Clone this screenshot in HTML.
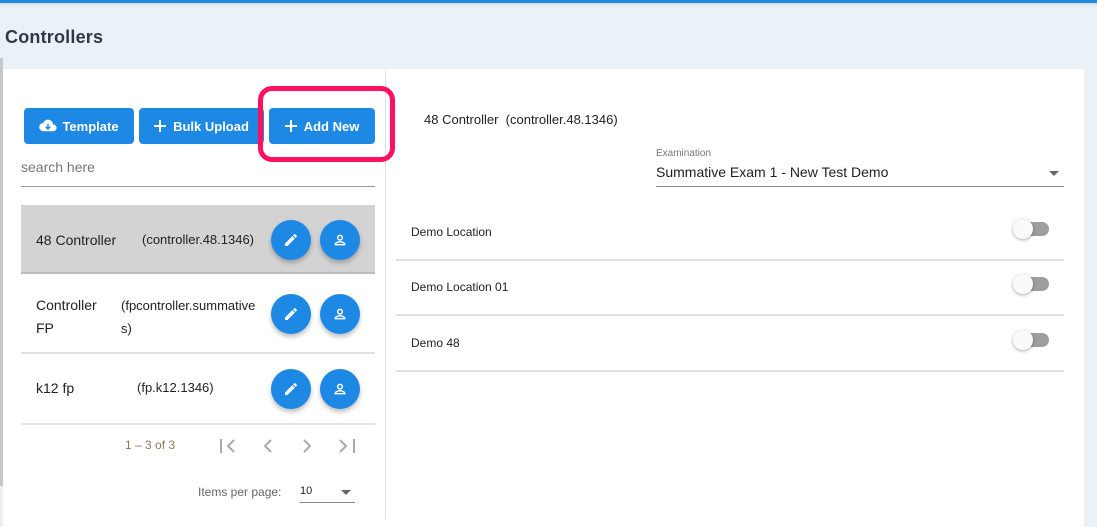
<!DOCTYPE html>
<html><head><style>
*{box-sizing:border-box;margin:0;padding:0}
body{width:1097px;height:527px;background:#ebf2f7;font-family:"Liberation Sans",sans-serif;position:relative;overflow:hidden;color:#222}
.a{position:absolute}
.btn{position:absolute;top:108px;height:36px;background:#1e88e5;color:#fff;border-radius:4px;font-size:13px;font-weight:bold;display:flex;align-items:center;justify-content:center;gap:5px}
.fab{position:absolute;width:40px;height:40px;border-radius:50%;background:#1e88e5;box-shadow:0 3px 5px rgba(0,0,0,.25);display:flex;align-items:center;justify-content:center}
.hr{position:absolute;height:2px;background:#e0e0e0}
.tog{position:absolute;width:34px;height:14px;border-radius:7px;background:#9e9e9e}
.tog:before{content:"";position:absolute;left:-2px;top:-3px;width:20px;height:20px;border-radius:50%;background:#fafafa;box-shadow:0 1px 3px rgba(0,0,0,.35)}
.plus{width:12px;height:12px;position:relative}
.plus:before,.plus:after{content:"";position:absolute;background:#fff}
.plus:before{left:5px;top:0;width:2px;height:12px}
.plus:after{left:0;top:5px;width:12px;height:2px}
</style></head><body>
<div class="a" style="left:0;top:0;width:1097px;height:3px;background:#1e88e5"></div>
<div class="a" style="left:0;top:3px;width:1097px;height:4px;background:linear-gradient(#d5dde3,#ebf2f7)"></div>
<div class="a" style="left:5px;top:27px;font-size:18px;color:#2d3a45;font-weight:bold;letter-spacing:0.2px;-webkit-text-stroke:0">Controllers</div>
<div class="a" style="left:0;top:58px;width:3px;height:428px;background:#c8c8c8"></div>
<div class="a" style="left:3px;top:69px;width:1081px;height:458px;background:#fff"></div>
<div class="a" style="left:385px;top:69px;width:1px;height:450px;background:#e0e0e0"></div>

<div class="btn" style="left:24px;width:110px"><svg width="18" height="14" viewBox="0 0 24 18"><path d="M19 7A7 7 0 0 0 5.5 5 5.5 5.5 0 0 0 6 16h13a4.5 4.5 0 0 0 0-9z" fill="#fff"/><path d="M12 6v6M9 10l3 3 3-3" stroke="#1e88e5" stroke-width="2" fill="none"/></svg>Template</div>
<div class="btn" style="left:139px;width:125px;gap:7px"><span class="plus"></span>Bulk Upload</div>
<div class="btn" style="left:269px;width:106px;gap:7px"><span class="plus"></span>Add New</div>
<div class="a" style="left:258px;top:86px;width:137px;height:76px;border:5px solid #ff1060;border-radius:14px"></div>

<div class="a" style="left:21px;top:159px;font-size:14px;color:#777">search here</div>
<div class="a" style="left:21px;top:186px;width:354px;height:1px;background:#999"></div>

<div class="a" style="left:21px;top:205px;width:354px;height:69px;background:#d3d3d3;border-bottom:2px solid #bbb"></div>
<div class="a" style="left:36px;top:232px;font-size:14px">48 Controller</div>
<div class="a" style="left:142px;top:232px;font-size:13px">(controller.48.1346)</div>
<div class="a" style="left:36px;top:294px;font-size:14px;line-height:23px">Controller<br>FP</div>
<div class="a" style="left:121px;top:294px;font-size:13px;line-height:23px">(fpcontroller.summative<br>s)</div>
<div class="hr" style="left:21px;top:352px;width:354px"></div>
<div class="a" style="left:36px;top:380px;font-size:14px">k12 fp</div>
<div class="a" style="left:137px;top:380px;font-size:13px">(fp.k12.1346)</div>
<div class="hr" style="left:21px;top:423px;width:354px"></div>

<div class="fab" style="left:271px;top:220px"><svg width="16" height="16" viewBox="0 0 24 24"><path d="M3 17.25V21h3.75L17.8 9.94l-3.75-3.75L3 17.25zM20.7 7.04a1 1 0 0 0 0-1.41l-2.34-2.34a1 1 0 0 0-1.41 0l-1.830 1.83 3.75 3.75 1.83-1.83z" fill="#fff"/></svg></div>
<div class="fab" style="left:320px;top:220px"><svg width="14" height="14" viewBox="0 0 24 24"><circle cx="12" cy="8" r="4" fill="none" stroke="#fff" stroke-width="2.5"/><path d="M4 20v-1c0-2 5-4 8-4s8 2 8 4v1z" fill="none" stroke="#fff" stroke-width="2.5"/></svg></div>
<div class="fab" style="left:271px;top:294px"><svg width="16" height="16" viewBox="0 0 24 24"><path d="M3 17.25V21h3.75L17.8 9.94l-3.75-3.75L3 17.25zM20.7 7.04a1 1 0 0 0 0-1.41l-2.34-2.34a1 1 0 0 0-1.41 0l-1.83 1.83 3.75 3.75 1.83-1.830z" fill="#fff"/></svg></div>
<div class="fab" style="left:320px;top:294px"><svg width="14" height="14" viewBox="0 0 24 24"><circle cx="12" cy="8" r="4" fill="none" stroke="#fff" stroke-width="2.5"/><path d="M4 20v-1c0-2 5-4 8-4s8 2 8 4v1z" fill="none" stroke="#fff" stroke-width="2.5"/></svg></div>
<div class="fab" style="left:271px;top:369px"><svg width="16" height="16" viewBox="0 0 24 24"><path d="M3 17.25V21h3.75L17.8 9.94l-3.75-3.75L3 17.25zM20.7 7.04a1 1 0 0 0 0-1.41l-2.34-2.34a1 1 0 0 0-1.41 0l-1.83 1.83 3.75 3.75 1.83-1.83z" fill="#fff"/></svg></div>
<div class="fab" style="left:320px;top:369px"><svg width="14" height="14" viewBox="0 0 24 24"><circle cx="12" cy="8" r="4" fill="none" stroke="#fff" stroke-width="2.5"/><path d="M4 20v-1c0-2 5-4 8-4s8 2 8 4v1z" fill="none" stroke="#fff" stroke-width="2.5"/></svg></div>

<div class="a" style="left:125px;top:438px;font-size:12px;color:#8a7a5a">1 – 3 of 3</div>
<svg class="a" style="left:216px;top:436px" width="145" height="20" viewBox="0 0 145 20"><g stroke="#aaa" stroke-width="2" fill="none"><path d="M5 3v14M18 4l-6 6 6 6"/><path d="M55 4l-6 6 6 6"/><path d="M88 4l6 6-6 6"/><path d="M124 4l6 6-6 6M138 3v14"/></g></svg>
<div class="a" style="left:198px;top:485px;font-size:12px;color:#666">Items per page:</div>
<div class="a" style="left:300px;top:485px;font-size:11px">10</div>
<div class="a" style="left:341px;top:490px;border-left:5px solid transparent;border-right:5px solid transparent;border-top:5px solid #666"></div>
<div class="a" style="left:300px;top:502px;width:55px;height:1px;background:#888"></div>

<div class="a" style="left:424px;top:112px;font-size:13px">48 Controller &nbsp;(controller.48.1346)</div>
<div class="a" style="left:656px;top:148px;font-size:10px;color:#777">Examination</div>
<div class="a" style="left:656px;top:164px;font-size:14px">Summative Exam 1 - New Test Demo</div>
<div class="a" style="left:1049px;top:171px;border-left:5px solid transparent;border-right:5px solid transparent;border-top:5px solid #666"></div>
<div class="a" style="left:656px;top:186px;width:408px;height:1px;background:#888"></div>

<div class="a" style="left:411px;top:225px;font-size:12px">Demo Location</div>
<div class="tog" style="left:1015px;top:222px"></div>
<div class="hr" style="left:396px;top:259px;width:668px"></div>
<div class="a" style="left:411px;top:280px;font-size:12px">Demo Location 01</div>
<div class="tog" style="left:1015px;top:277px"></div>
<div class="hr" style="left:396px;top:314px;width:668px"></div>
<div class="a" style="left:411px;top:336px;font-size:12px">Demo 48</div>
<div class="tog" style="left:1015px;top:333px"></div>
<div class="hr" style="left:396px;top:370px;width:668px"></div>
</body></html>
